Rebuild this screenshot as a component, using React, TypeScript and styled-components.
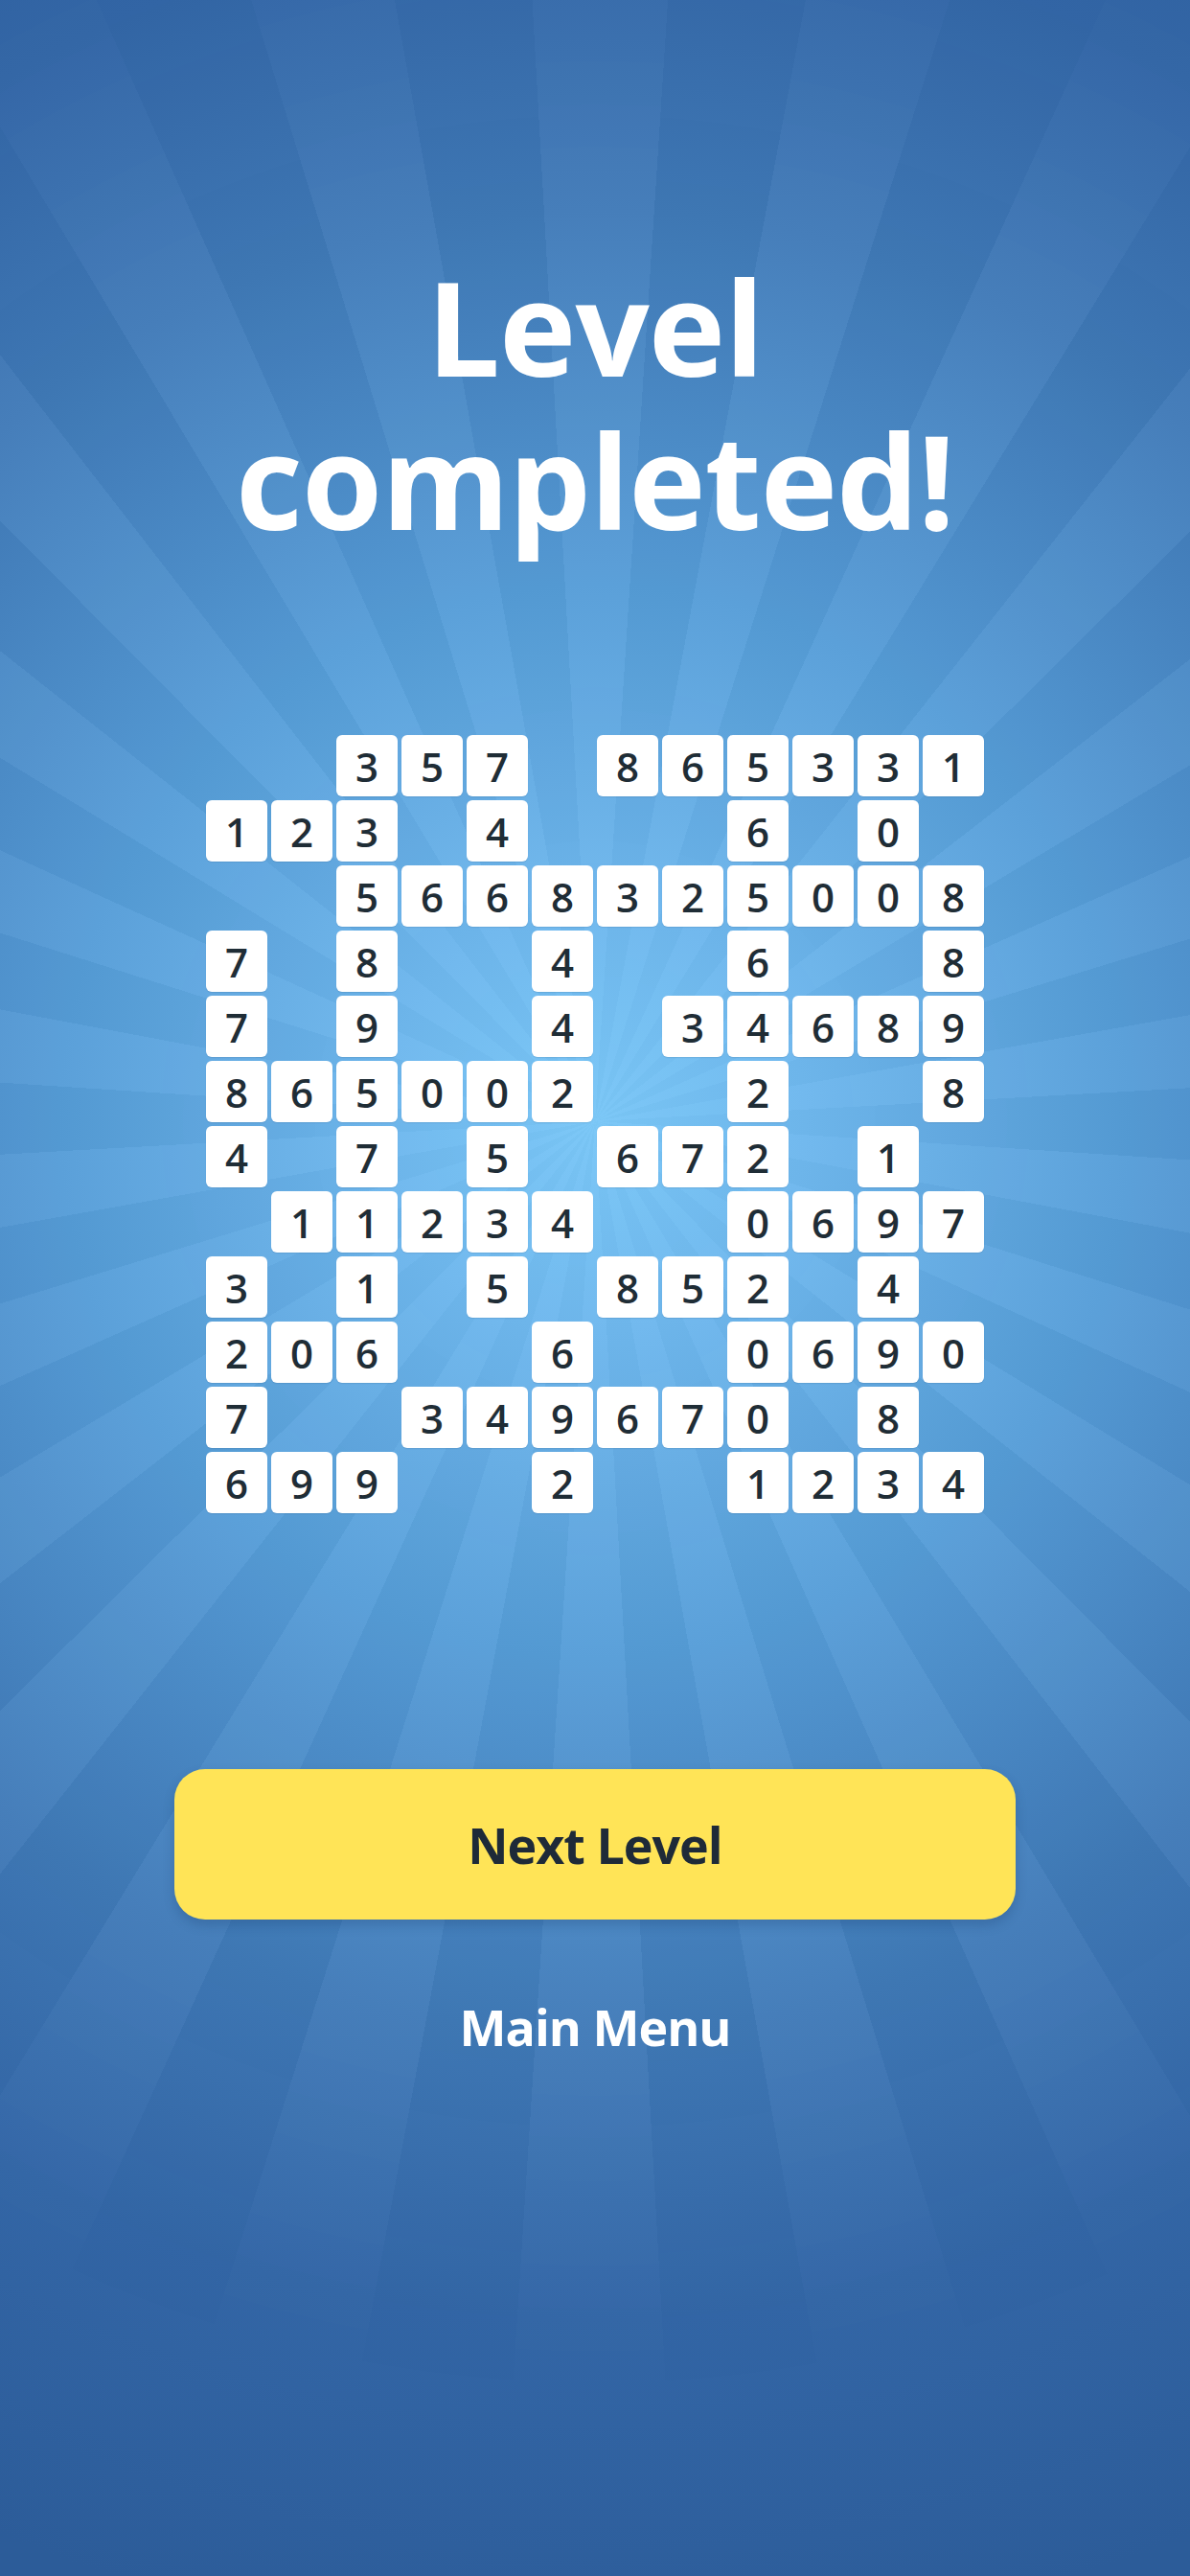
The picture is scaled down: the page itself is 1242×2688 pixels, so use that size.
import * as React from "react";
import styled, { createGlobalStyle } from "styled-components";

const GlobalStyle = createGlobalStyle`
  html, body {
    margin: 0;
    padding: 0;
    background: #2c5c99;
  }
  * {
    box-sizing: border-box;
  }
`;

// center of the light burst, lines up with the middle of the board
const CX = "50%";
const CY = "1170px";

const Page = styled.div`
  position: relative;
  width: 1242px;
  min-height: 2688px;
  overflow: hidden;
  display: flex;
  flex-direction: column;
  align-items: center;
  font-family: "Open Sans", "Noto Sans", "Liberation Sans", sans-serif;
  background: radial-gradient(
    circle at ${CX} ${CY},
    #7bc8f7 0,
    #6fb8ee 220px,
    #569dd8 560px,
    #407ab8 950px,
    #3366a6 1250px,
    #2c5c99 1600px
  );

  &::before {
    content: "";
    position: absolute;
    inset: 0;
    pointer-events: none;
    background: repeating-conic-gradient(
      from -3.2deg at ${CX} ${CY},
      rgba(255, 255, 255, 0.035) 0deg 6.92deg,
      rgba(0, 0, 0, 0.025) 6.92deg 13.846deg
    );
    -webkit-mask-image: radial-gradient(
      circle at ${CX} ${CY},
      rgba(0, 0, 0, 0.4) 0,
      #000 500px,
      #000 950px,
      transparent 1350px
    );
    mask-image: radial-gradient(
      circle at ${CX} ${CY},
      rgba(0, 0, 0, 0.4) 0,
      #000 500px,
      #000 950px,
      transparent 1350px
    );
  }
`;

const Content = styled.div`
  position: relative;
  z-index: 1;
  display: flex;
  flex-direction: column;
  align-items: center;
  padding-top: 261px;
`;

const Title = styled.h1`
  margin: 0;
  display: flex;
  flex-direction: column;
  align-items: center;
  font-size: 136px;
  line-height: 160px;
  font-weight: 700;
  color: #ffffff;
  text-align: center;
  letter-spacing: -1px;
`;

const TitleLine = styled.span`
  display: block;
  height: 160px;
`;

const Board = styled.div`
  margin-top: 186px;
  display: grid;
  grid-template-columns: repeat(12, 64px);
  grid-auto-rows: 64px;
  gap: 4px;
`;

const Tile = styled.div<{ $empty?: boolean }>`
  display: flex;
  align-items: center;
  justify-content: center;
  border-radius: 6px;
  background: ${(p) => (p.$empty ? "transparent" : "#ffffff")};
  box-shadow: ${(p) =>
    p.$empty ? "none" : "0 1px 1px rgba(20, 50, 90, 0.12)"};
  color: #1f2d36;
  font-size: 42px;
  font-weight: 600;
  line-height: 1;
  padding-top: 2px;
`;

const PrimaryButton = styled.button`
  margin-top: 267px;
  width: 878px;
  height: 157px;
  border: none;
  border-radius: 32px;
  background: #ffe457;
  box-shadow: 0 6px 12px rgba(15, 45, 90, 0.22);
  color: #1e2a38;
  font-family: inherit;
  font-size: 52px;
  font-weight: 700;
  line-height: 1;
  letter-spacing: -1px;
  display: flex;
  align-items: center;
  justify-content: center;
  cursor: pointer;
`;

const TextButton = styled.button`
  margin-top: 86px;
  border: none;
  background: none;
  padding: 0;
  color: #ffffff;
  font-family: inherit;
  font-size: 52px;
  font-weight: 700;
  line-height: 1;
  letter-spacing: -1px;
  cursor: pointer;
`;

const rows = [
  "..357.865331",
  "123.4...6.0.",
  "..5668325008",
  "7.8..4..6..8",
  "7.9..4.34689",
  "865002..2..8",
  "4.7.5.672.1.",
  ".11234..0697",
  "3.1.5.852.4.",
  "206..6..0690",
  "7..349670.8.",
  "699..2..1234",
];

export default function App() {
  return (
    <Page>
      <GlobalStyle />
      <Content>
        <Title>
          <TitleLine>Level</TitleLine>
          <TitleLine>completed!</TitleLine>
        </Title>
        <Board>
          {rows.map((row, r) =>
            row.split("").map((ch, c) =>
              ch === "." ? (
                <Tile key={`${r}-${c}`} $empty />
              ) : (
                <Tile key={`${r}-${c}`}>{ch}</Tile>
              )
            )
          )}
        </Board>
        <PrimaryButton>Next Level</PrimaryButton>
        <TextButton>Main Menu</TextButton>
      </Content>
    </Page>
  );
}
